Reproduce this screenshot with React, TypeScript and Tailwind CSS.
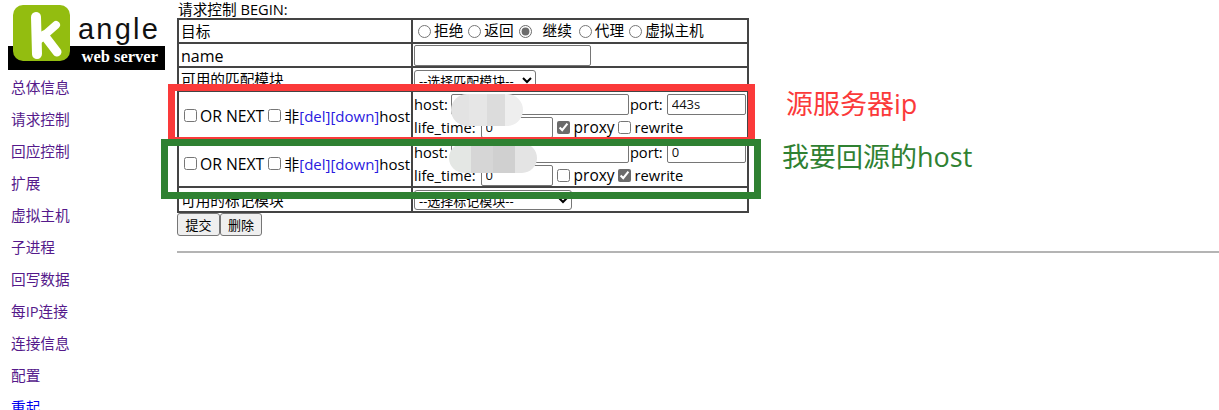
const navItems = ["总体信息", "请求控制", "回应控制", "扩展", "虚拟主机", "子进程", "回写数据", "每IP连接", "连接信息", "配置", "重起"];

const cell = "border border-[#444] p-0";
const textInput = "border border-[#767676] rounded-[2px] bg-white h-[21px] px-[4px] text-[13px] leading-none text-[#111]";
const check = "m-[3px] w-[13px] h-[13px] accent-[#6b6b6b] align-middle";
const link = "text-[#2a1ae0] text-[15px]";

function Radio({ label, checked }: { label: string; checked?: boolean }) {
  return (
    <>
      <input type="radio" name="target" defaultChecked={checked} className="m-[3px] ml-[5px] w-[13px] h-[13px] accent-[#6b6b6b] align-middle" />
      {label}
    </>
  );
}

function MatchLeft() {
  return (
    <td className={cell}>
      <div className="flex items-center h-[46px] pl-[2px] pt-[1px] whitespace-nowrap text-[15.7px]">
        <input type="checkbox" className={check} />
        <span>OR NEXT</span>
        <input type="checkbox" className={`${check} ml-[4px]`} />
        <span className="text-[15px]">非</span>
        <span className={link}>[del]</span>
        <span className={link}>[down]</span>
        <span className="text-[15px]">host</span>
      </div>
    </td>
  );
}

function MatchRight({ port, proxy, rewrite }: { port: string; proxy?: boolean; rewrite?: boolean }) {
  return (
    <td className={cell}>
      <div className="flex items-center h-[24px] whitespace-nowrap pl-[1px]">
        host:
        <input className={`${textInput} w-[178px] ml-[3px]`} />
        <span className="ml-[1px]">port:</span>
        <input defaultValue={port} className={`${textInput} w-[79px] ml-[4px]`} />
      </div>
      <div className="flex items-center h-[22px] whitespace-nowrap pl-[1px]">
        life_time:
        <input defaultValue="0" className={`${textInput} w-[72px] ml-[5px]`} />
        <input type="checkbox" defaultChecked={proxy} className={`${check} ml-[4px]`} />
        <span className="ml-[1px] text-[15.5px]">proxy</span>
        <input type="checkbox" defaultChecked={rewrite} className={check} />
        <span className="ml-[1px]">rewrite</span>
      </div>
    </td>
  );
}

function Blur({ className, cols }: { className: string; cols: string[] }) {
  return (
    <div className={`absolute flex overflow-hidden rounded-[16px] ${className}`}>
      {cols.map((c, i) => (
        <div key={i} className="flex-1" style={{ background: c }} />
      ))}
    </div>
  );
}

export default function App() {
  return (
    <div className="relative h-[410px] overflow-hidden bg-white text-[14.67px] leading-[18px] text-black font-['Open_Sans','Noto_Sans_CJK_SC',sans-serif]">
      <div className="flex">
        {/* Left nav */}
        <div className="w-[177px] shrink-0 pl-[8px]">
          <div className="relative w-[157px] h-[70px]">
            <div className="absolute left-0 right-0 top-[46px] h-[24px] bg-black text-white text-right pr-[7px] font-['Liberation_Serif',serif] font-bold text-[16.5px] leading-[22px]">
              web server
            </div>
            <div className="absolute left-[5px] top-[5px] w-[57px] h-[56px] rounded-[10px] bg-[#93bd10]">
              <svg width="57" height="56" viewBox="0 0 57 56" fill="none" stroke="#fff" strokeLinecap="round">
                <line x1="23" y1="12" x2="24" y2="49" strokeWidth="10" />
                <line x1="27" y1="34" x2="43" y2="20" strokeWidth="8" />
                <line x1="31" y1="30" x2="44" y2="47" strokeWidth="9" />
              </svg>
            </div>
            <div className="absolute left-[70px] top-[14px] font-['Liberation_Sans',sans-serif] text-[29px] leading-[30px] tracking-[2.2px] text-[#111]">
              angle
            </div>
          </div>
          <div className="flex flex-col gap-[14px] pt-[8px] pl-[3px]">
            {navItems.map((item, i) => (
              <a key={item} className={i === navItems.length - 1 ? "text-[#0000ee]" : "text-[#551a8b]"}>
                {item}
              </a>
            ))}
          </div>
        </div>

        {/* Main */}
        <div className="flex-1 min-w-0">
          <div className="h-[18px] pl-[1px]">请求控制 BEGIN:</div>
          <table className="table-fixed w-[572px] border border-[#444] border-separate border-spacing-0">
            <tbody>
              <tr className="h-[24px]">
                <td className={`${cell} w-[234px] pl-[2px]`}>目标</td>
                <td className={`${cell} whitespace-nowrap`}>
                  <Radio label="拒绝" />
                  <Radio label="返回" />
                  <Radio label=" " checked />
                  <span className="ml-[4px] mr-[2px]">继续</span>
                  <Radio label="代理" />
                  <Radio label="虚拟主机" />
                </td>
              </tr>
              <tr className="h-[24px]">
                <td className={`${cell} pl-[2px] pt-[2px] text-[16px]`}>name</td>
                <td className={cell}>
                  <input className={`${textInput} w-[177px] ml-[1px] align-middle`} />
                </td>
              </tr>
              <tr className="h-[24px]">
                <td className={`${cell} pl-[2px]`}>可用的匹配模块</td>
                <td className={cell}>
                  <select className="ml-[1px] h-[20px] w-[122px] border border-[#767676] rounded-[3px] bg-white text-[13px] align-middle">
                    <option>--选择匹配模块--</option>
                  </select>
                </td>
              </tr>
              <tr>
                <MatchLeft />
                <MatchRight port="443s" proxy />
              </tr>
              <tr>
                <MatchLeft />
                <MatchRight port="0" rewrite />
              </tr>
              <tr className="h-[25px]">
                <td className={`${cell} pl-[2px]`}>可用的标记模块</td>
                <td className={cell}>
                  <select className="ml-[1px] h-[20px] w-[158px] border border-[#767676] rounded-[3px] bg-white text-[13px] align-middle">
                    <option>--选择标记模块--</option>
                  </select>
                </td>
              </tr>
            </tbody>
          </table>
          <div className="flex">
            <button className="h-[23px] w-[43px] border border-[#767676] rounded-[3px] bg-[#efefef] text-[13px]">提交</button>
            <button className="h-[23px] w-[42px] border border-[#767676] rounded-[3px] bg-[#efefef] text-[13px]">删除</button>
          </div>
          <hr className="mt-[15px] border-t-2 border-[#b4b4b4]" />
        </div>
      </div>

      {/* Mosaic over the hosts */}
      <Blur className="left-[451px] top-[94px] w-[72px] h-[32px]" cols={["#e3e3e3", "#e6e6e6", "#dcdcdc", "#eeeeee"]} />
      <Blur className="left-[449px] top-[143px] w-[88px] h-[30px]" cols={["#e4e7e4", "#d6d6d6", "#d0d0d0", "#e4e4e4"]} />

      {/* Annotations */}
      <div className="absolute left-[168px] top-[84px] w-[587px] h-[60px] border-[7px] border-[#fb3a3a]" />
      <div className="absolute left-[161px] top-[139px] w-[600px] h-[60px] border-[7px] border-[#2f8132]" />
      <div className="absolute left-[786px] top-[86px] text-[27px] leading-[36px] text-[#fb3a3a]">源服务器ip</div>
      <div className="absolute left-[782px] top-[139px] text-[27px] leading-[36px] text-[#2f8132]">我要回源的host</div>
    </div>
  );
}
